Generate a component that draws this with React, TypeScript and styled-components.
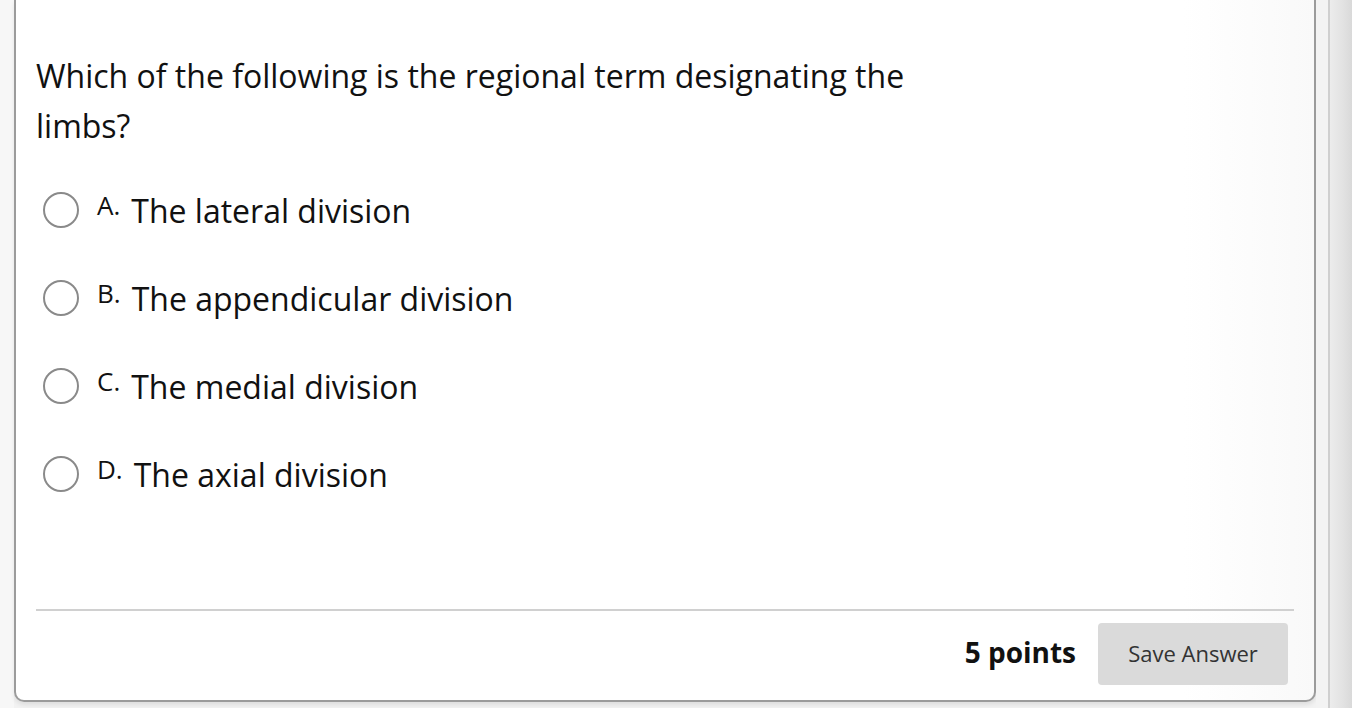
import React from "react";
import styled, { createGlobalStyle } from "styled-components";

const Global = createGlobalStyle`
  html, body { margin: 0; padding: 0; }
  body {
    width: 1352px;
    height: 708px;
    overflow: hidden;
    background: #f2f2f2;
    font-family: "Open Sans", "Noto Sans", sans-serif;
    color: #111;
  }
`;

const Page = styled.div`
  display: flex;
  height: 708px;
`;

const Gutter = styled.div`
  width: 14px;
  flex: none;
  background: #f7f7f7;
`;

const Card = styled.div`
  width: 1302px;
  height: 702px;
  box-sizing: border-box;
  flex: none;
  background: linear-gradient(90deg, #ffffff 0%, #ffffff 90%, #f9f9f9 100%);
  border: 2px solid #9b9b9b;
  border-top: none;
  border-radius: 0 0 10px 10px;
  box-shadow: 0 3px 4px rgba(0, 0, 0, 0.08);
  display: flex;
  flex-direction: column;
  padding: 51px 20px 0 20px;
`;

const Question = styled.p`
  margin: 0;
  font-size: 32px;
  line-height: 50px;
  max-width: 900px;
  color: #111;
`;

const Options = styled.div`
  display: flex;
  flex-direction: column;
  margin-top: 15px;
  padding-left: 7px;
`;

const Option = styled.label`
  display: flex;
  align-items: center;
  height: 88px;
  cursor: pointer;
`;

const Radio = styled.span`
  width: 36px;
  height: 36px;
  box-sizing: border-box;
  border: 2px solid #8a8a8a;
  border-radius: 50%;
  background: #fff;
  flex: none;
  margin-right: 18px;
`;

const Letter = styled.span`
  font-size: 26px;
  position: relative;
  top: -5px;
  margin-right: 11px;
  color: #111;
`;

const OptionText = styled.span`
  font-size: 32px;
  color: #111;
`;

const Spacer = styled.div`
  flex: 1;
`;

const Divider = styled.div`
  height: 2px;
  background: #d0d0d0;
`;

const Footer = styled.div`
  display: flex;
  justify-content: flex-end;
  align-items: center;
  gap: 22px;
  padding: 12px 6px 15px 0;
`;

const Points = styled.span`
  font-size: 28px;
  font-weight: 700;
  line-height: 1;
  margin-top: -4px;
  color: #111;
`;

const SaveButton = styled.button`
  width: 190px;
  height: 62px;
  border: none;
  border-radius: 4px;
  background: #dadada;
  font-family: "Open Sans", "Noto Sans", sans-serif;
  font-size: 22px;
  line-height: 1;
  padding: 0 0 3px;
  color: #333;
`;

const Rail = styled.div`
  flex: 1;
  display: flex;
`;

const RailInner = styled.div`
  width: 12px;
  background: #f3f3f3;
`;

const RailLine = styled.div`
  width: 2px;
  background: #cfcfcf;
`;

const RailTrack = styled.div`
  flex: 1;
  background: linear-gradient(90deg, #ececec 0%, #e2e2e2 60%, #d9d9d9 100%);
`;

const options = [
  { letter: "A.", text: "The lateral division" },
  { letter: "B.", text: "The appendicular division" },
  { letter: "C.", text: "The medial division" },
  { letter: "D.", text: "The axial division" },
];

export default function App() {
  return (
    <>
      <Global />
      <Page>
        <Gutter />
        <Card>
          <Question>
            Which of the following is the regional term designating the limbs?
          </Question>
          <Options>
            {options.map((o) => (
              <Option key={o.letter}>
                <Radio />
                <Letter>{o.letter}</Letter>
                <OptionText>{o.text}</OptionText>
              </Option>
            ))}
          </Options>
          <Spacer />
          <Divider />
          <Footer>
            <Points>5 points</Points>
            <SaveButton>Save Answer</SaveButton>
          </Footer>
        </Card>
        <Rail>
          <RailInner />
          <RailLine />
          <RailTrack />
        </Rail>
      </Page>
    </>
  );
}
